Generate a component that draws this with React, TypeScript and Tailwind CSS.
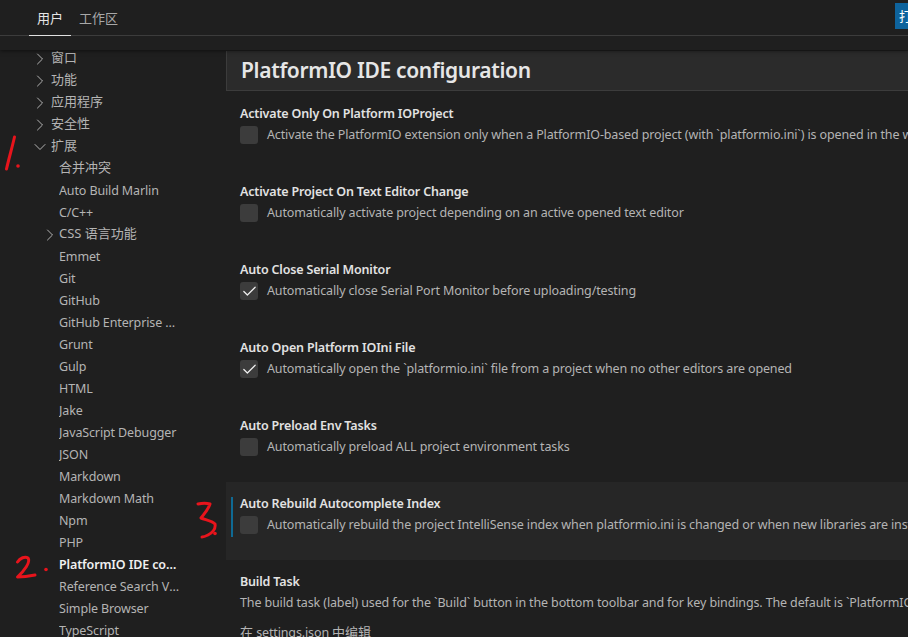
import React from "react";
import { Check, ChevronDown, ChevronRight } from "lucide-react";

const font = { fontFamily: '"Noto Sans", "Noto Sans CJK SC", sans-serif' };

const tree = [
  { label: "窗口", depth: 1, icon: "right", cjk: true },
  { label: "功能", depth: 1, icon: "right", cjk: true },
  { label: "应用程序", depth: 1, icon: "right", cjk: true },
  { label: "安全性", depth: 1, icon: "right", cjk: true },
  { label: "扩展", depth: 1, icon: "down", cjk: true },
  { label: "合并冲突", depth: 2, cjk: true },
  { label: "Auto Build Marlin", depth: 2 },
  { label: "C/C++", depth: 2 },
  { label: "CSS 语言功能", depth: 2, icon: "right", cjk: true },
  { label: "Emmet", depth: 2 },
  { label: "Git", depth: 2 },
  { label: "GitHub", depth: 2 },
  { label: "GitHub Enterprise Server Authentication", depth: 2 },
  { label: "Grunt", depth: 2 },
  { label: "Gulp", depth: 2 },
  { label: "HTML", depth: 2 },
  { label: "Jake", depth: 2 },
  { label: "JavaScript Debugger", depth: 2 },
  { label: "JSON", depth: 2 },
  { label: "Markdown", depth: 2 },
  { label: "Markdown Math", depth: 2 },
  { label: "Npm", depth: 2 },
  { label: "PHP", depth: 2 },
  { label: "PlatformIO IDE configuration", depth: 2, active: true },
  { label: "Reference Search View", depth: 2 },
  { label: "Simple Browser", depth: 2 },
  { label: "TypeScript", depth: 2 },
];

const settings = [
  {
    title: "Activate Only On Platform IOProject",
    desc: "Activate the PlatformIO extension only when a PlatformIO-based project (with `platformio.ini`) is opened in the workspace.",
    checked: false,
  },
  {
    title: "Activate Project On Text Editor Change",
    desc: "Automatically activate project depending on an active opened text editor",
    checked: false,
  },
  {
    title: "Auto Close Serial Monitor",
    desc: "Automatically close Serial Port Monitor before uploading/testing",
    checked: true,
  },
  {
    title: "Auto Open Platform IOIni File",
    desc: "Automatically open the `platformio.ini` file from a project when no other editors are opened",
    checked: true,
  },
  {
    title: "Auto Preload Env Tasks",
    desc: "Automatically preload ALL project environment tasks",
    checked: false,
  },
  {
    title: "Auto Rebuild Autocomplete Index",
    desc: "Automatically rebuild the project IntelliSense index when platformio.ini is changed or when new libraries are installed.",
    checked: false,
    focused: true,
  },
];

function TreeRow({ item }: { item: (typeof tree)[number] }) {
  return (
    <div className={`flex h-[22px] items-center ${item.depth === 1 ? "pl-[31px]" : "pl-[41px]"}`}>
      <span className="flex w-[18px] shrink-0 items-center justify-center text-[#c0c0c0]">
        {item.icon === "right" && <ChevronRight size={20} strokeWidth={1.1} className="shrink-0" />}
        {item.icon === "down" && <ChevronDown size={20} strokeWidth={1.1} className="shrink-0" />}
      </span>
      <span
        className={`truncate ${item.depth === 1 ? "pl-[2px]" : "w-[121px]"} ${
          item.cjk ? "-mt-[2px] text-[13px] tracking-normal" : ""
        } ${item.active ? "font-semibold text-[#f0f0f0]" : "text-[#b4b4b4]"}`}
      >
        {item.label}
      </span>
    </div>
  );
}

function SettingRow({ s }: { s: (typeof settings)[number] }) {
  return (
    <div className={`relative h-[78px] pl-[14px] pt-[11px] ${s.focused ? "bg-[#262626]" : ""}`}>
      {s.focused && <div className="absolute left-[5px] top-[15px] h-[40px] w-[2px] bg-[#0f6a94]" />}
      <div className="h-[21px] font-semibold leading-[21px] tracking-[-0.17px] text-[#e2e2e2]">{s.title}</div>
      <div className="mt-[2px] flex h-[18px] items-center gap-[9px]">
        <span className="flex h-[18px] w-[18px] shrink-0 items-center justify-center rounded-[3px] bg-[#3c3c3c] text-[#f0f0f0]">
          {s.checked && <Check size={17} strokeWidth={1.7} />}
        </span>
        <span className="whitespace-nowrap text-[#b4b4b4]">{s.desc}</span>
      </div>
    </div>
  );
}

function Scribbles() {
  return (
    <svg className="pointer-events-none absolute left-0 top-0 z-20" width="908" height="637" fill="none" stroke="#e8141c" strokeWidth="3" strokeLinecap="round" strokeLinejoin="round">
      <path d="M14.5 137 C12 148 9 158 6.5 169" />
      <circle cx="18" cy="166" r="1.8" fill="#e8141c" stroke="none" />
      <path d="M17.5 562 C20 558 25 556 28 558 C31 562 24 571 17.5 577 C24 577 30 576 35 575" />
      <circle cx="46" cy="569.5" r="1.8" fill="#e8141c" stroke="none" />
      <path d="M198 504 C202 503 207 503 210 504 C208 510 204 514 201 518 C206 520 212 521 215 524 C216 529 212 533 208 535 C206 536 204 537 202 537" />
      <circle cx="215" cy="533.5" r="1.8" fill="#e8141c" stroke="none" />
    </svg>
  );
}

export default function App() {
  return (
    <div className="relative h-[637px] w-[908px] overflow-hidden bg-[#1f1f1f] text-[12.5px] tracking-[-0.13px]" style={font}>
      <header className="relative z-10 h-[50px] bg-[#1f1f1f] text-[13px] tracking-normal shadow-[0_1px_4px_rgba(0,0,0,0.5)]">
        <div className="flex h-[36px] items-end border-b border-[#3c3c3c] pl-[29px]">
          <div className="-mb-px flex h-[36px] items-center border-b border-[#e0e0e0] px-[8px] pt-[2px] text-[#e6e6e6]">用户</div>
          <div className="-mb-px flex h-[36px] items-center px-[8px] pt-[2px] text-[#a8a8a8]">工作区</div>
        </div>
        <div className="absolute right-0 top-[3px] h-[26px] w-[13px] overflow-hidden bg-[#0e639c] pl-[4px] leading-[26px] text-white">
          打
        </div>
      </header>
      <div className="flex">
        <aside className="-mt-[2px] w-[226px] shrink-0">
          {tree.map((item) => (
            <TreeRow key={item.label} item={item} />
          ))}
        </aside>
        <main className="min-w-0 flex-1">
          <div className="mt-px h-[40px] border-b border-l border-[#3c3c3c] bg-[#2b2b2b] pl-[14px] text-[21px] font-semibold leading-[38px] tracking-[-0.32px] text-[#e6e6e6]">
            PlatformIO IDE configuration
          </div>
          <div className="mt-px">
            {settings.map((s) => (
              <SettingRow key={s.title} s={s} />
            ))}
            <div className="pl-[14px] pt-[11px]">
              <div className="h-[21px] font-semibold leading-[21px] tracking-[-0.17px] text-[#e2e2e2]">Build Task</div>
              <div className="whitespace-nowrap leading-[21px] text-[#b4b4b4]">
                The build task (label) used for the `Build` button in the bottom toolbar and for key bindings. The default is `PlatformIO: Build`
              </div>
              <div className="mt-[9px] whitespace-nowrap leading-[21px] text-[#b4b4b4]">
                <span className="text-[13px] tracking-normal">在</span> settings.json <span className="text-[13px] tracking-normal">中编辑</span>
              </div>
            </div>
          </div>
        </main>
      </div>
      <Scribbles />
    </div>
  );
}
